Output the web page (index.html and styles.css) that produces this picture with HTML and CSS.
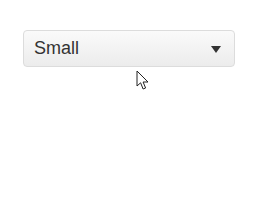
FILE: index.html
```html
<!DOCTYPE html>
<html lang="en">
<head>
    <meta charset="UTF-8">
    <title>Size select</title>
    <link rel="stylesheet" href="styles.css">
</head>
<body>
    <div class="page">
        <div class="select">
            <span class="select-value">Small</span>
            <span class="select-caret"></span>
        </div>
        <div class="pointer">
            <svg width="14" height="21" viewBox="0 0 14 21">
                <path d="M1 1 L1 16 L4.6 12.8 L7.1 19 L9.6 18 L7.1 12 L12 12 Z" fill="#ffffff" stroke="#222222" stroke-width="1"></path>
            </svg>
        </div>
    </div>
</body>
</html>
```

FILE: styles.css
```css
* {
    margin: 0;
    padding: 0;
    box-sizing: border-box;
}

body {
    font-family: "Liberation Sans", Arial, sans-serif;
    background: #fff;
}

.page {
    position: relative;
    min-height: 120px;
    padding: 30px 20px 0 23px;
}

.select {
    width: 212px;
    height: 37px;
    display: flex;
    align-items: center;
    justify-content: space-between;
    padding: 0 13px 0 10px;
    border: 1px solid #dcdcdc;
    border-radius: 4px;
    background: linear-gradient(to bottom, #fafafa 0%, #ececec 100%);
}

.select-value {
    font-size: 18px;
    color: #333;
}

.select-caret {
    width: 0;
    height: 0;
    margin-top: 1px;
    border-left: 5px solid transparent;
    border-right: 5px solid transparent;
    border-top: 7px solid #333;
}

.pointer {
    position: absolute;
    left: 136px;
    top: 70px;
    width: 14px;
    height: 21px;
}

.pointer svg {
    display: block;
}
```
